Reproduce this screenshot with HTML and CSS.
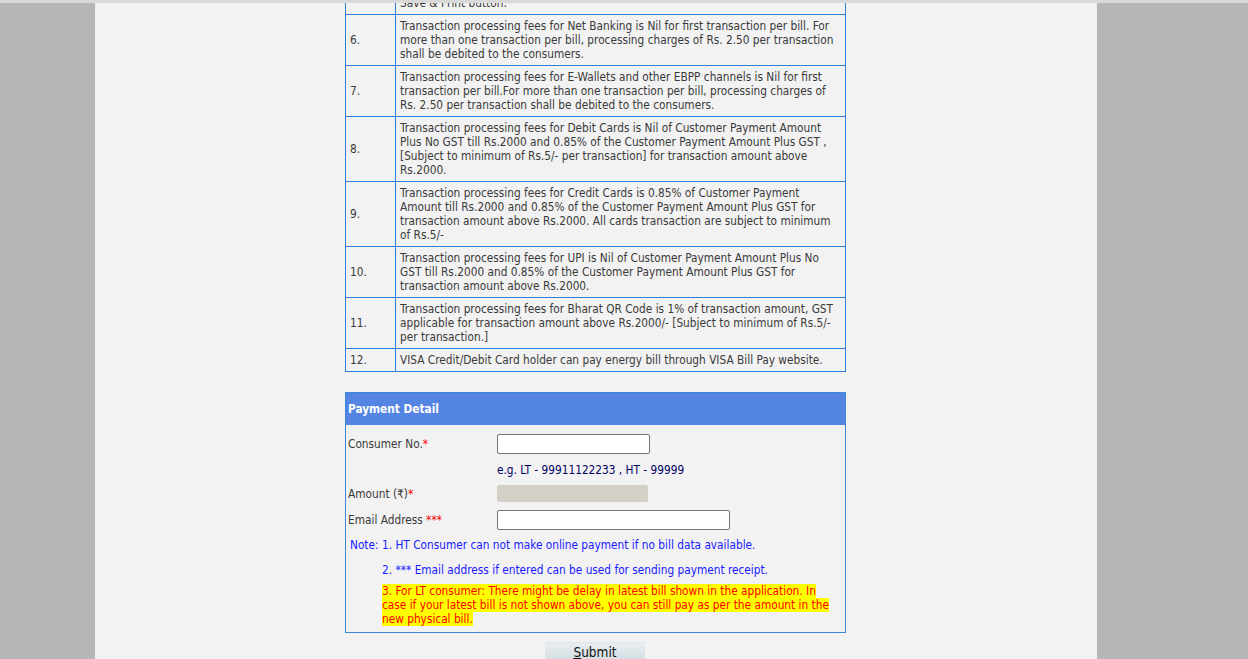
FILE: index.html
```html
<!DOCTYPE html>
<html>
<head>
<meta charset="utf-8">
<title>Online Bill Payment</title>
<link rel="stylesheet" href="styles.css">
</head>
<body>
<div class="topline"></div>
<div class="page">
  <table class="terms">
    <tr><td class="num">5.</td><td>After successful payment, consumer will get the payment receipt on screen. Consumer can take print of the receipt or save it for future reference by clicking on<br>Save &amp; Print button.</td></tr>
    <tr><td class="num">6.</td><td>Transaction processing fees for Net Banking is Nil for first transaction per bill. For more than one transaction per bill, processing charges of Rs. 2.50 per transaction shall be debited to the consumers.</td></tr>
    <tr><td class="num">7.</td><td>Transaction processing fees for E-Wallets and other EBPP channels is Nil for first transaction per bill.For more than one transaction per bill, processing charges of Rs. 2.50 per transaction shall be debited to the consumers.</td></tr>
    <tr><td class="num">8.</td><td>Transaction processing fees for Debit Cards is Nil of Customer Payment Amount Plus No GST till Rs.2000 and 0.85% of the Customer Payment Amount Plus GST , [Subject to minimum of Rs.5/- per transaction] for transaction amount above Rs.2000.</td></tr>
    <tr><td class="num">9.</td><td>Transaction processing fees for Credit Cards is 0.85% of Customer Payment Amount till Rs.2000 and 0.85% of the Customer Payment Amount Plus GST for transaction amount above Rs.2000. All cards transaction are subject to minimum of Rs.5/-</td></tr>
    <tr><td class="num">10.</td><td>Transaction processing fees for UPI is Nil of Customer Payment Amount Plus No GST till Rs.2000 and 0.85% of the Customer Payment Amount Plus GST for transaction amount above Rs.2000.</td></tr>
    <tr><td class="num">11.</td><td>Transaction processing fees for Bharat QR Code is 1% of transaction amount, GST applicable for transaction amount above Rs.2000/- [Subject to minimum of Rs.5/- per transaction.]</td></tr>
    <tr><td class="num">12.</td><td>VISA Credit/Debit Card holder can pay energy bill through VISA Bill Pay website.</td></tr>
  </table>

  <div class="payment">
    <div class="payment-head">Payment Detail</div>
    <div class="payment-body">
      <div class="frow r-consumer">
        <label class="lbl">Consumer No.<span class="req">*</span></label>
        <input class="inp inp-consumer" type="text">
      </div>
      <div class="frow r-hint">
        <span class="lbl"></span>
        <span class="hint">e.g. LT - 99911122233 , HT - 99999</span>
      </div>
      <div class="frow r-amount">
        <label class="lbl">Amount (&#8377;)<span class="req">*</span></label>
        <input class="inp inp-amount" type="text" disabled>
      </div>
      <div class="frow r-email">
        <label class="lbl">Email Address <span class="req">***</span></label>
        <input class="inp inp-email" type="text">
      </div>
      <div class="note note1">Note: 1. HT Consumer can not make online payment if no bill data available.</div>
      <div class="note note2">2. *** Email address if entered can be used for sending payment receipt.</div>
      <div class="note note3"><span class="hl">3. For LT consumer: There might be delay in latest bill shown in the application. In case if your latest bill is not shown above, you can still pay as per the amount in the new physical bill.</span></div>
    </div>
  </div>

  <div class="actions">
    <button class="submit" type="button"><u>S</u>ubmit</button>
  </div>
</div>
</body>
</html>
```

FILE: styles.css
```css
html, body {
  margin: 0;
  padding: 0;
  height: 100%;
  overflow: hidden;
}
body {
  background: #b6b6b6;
  font-family: "DejaVu Sans Condensed", "DejaVu Sans", sans-serif;
  font-stretch: condensed;
  font-size: 11.75px;
  line-height: 14px;
  color: #3a3a3a;
}
.topline {
  height: 3px;
  background: #d9d9d9;
}
.page {
  margin-left: 95px;
  width: 1002px;
  height: 656px;
  background: #f2f2f2;
  overflow: hidden;
}
.terms {
  width: 501px;
  margin: -40px 0 0 250px;
  border-collapse: collapse;
}
.terms td {
  border: 1px solid #2f80d8;
  padding: 4px 4px 4px 4px;
  vertical-align: middle;
}
.terms td.num {
  width: 41px;
}
.payment {
  width: 499px;
  margin: 20px 0 0 250px;
  border: 1px solid #3b88d8;
}
.payment-head {
  height: 32px;
  background: #5585e3;
  color: #fff;
  font-weight: bold;
  display: flex;
  align-items: center;
  padding-left: 2px;
}
.payment-body {
  padding: 9px 0 6px 2px;
}
.frow {
  display: flex;
  align-items: center;
}
.lbl {
  width: 149px;
  flex: none;
}
.req { color: #ff0000; }
.inp {
  box-sizing: border-box;
  margin: 0;
  padding: 0 2px;
  font: inherit;
  background: #fff;
  border: 1px solid #767676;
  border-radius: 2px;
}
.inp-consumer { width: 153px; height: 20px; }
.inp-amount { width: 151px; height: 17px; background: #d4d0c8; border-color: #d4d0c8; }
.inp-email { width: 233px; height: 20px; }
.r-hint { margin-top: 9px; }
.r-amount { margin-top: 8px; }
.r-email { margin-top: 8px; }
.hint { color: #000066; }
.note { color: #1a1aff; }
.note1 { margin-top: 8px; padding-left: 2px; }
.note2 { margin-top: 11px; padding-left: 34px; }
.note3 { margin-top: 7px; padding-left: 34px; padding-right: 12px; color: #ff0000; }
.hl { background: #ffff00; }
.actions {
  display: flex;
  justify-content: center;
  margin-top: 9px;
}
.submit {
  width: 100px;
  height: 24px;
  margin-left: -2px;
  border: 1px solid #dfe5e9;
  border-radius: 2px;
  background: linear-gradient(#e9eef1, #cdd8de);
  font-family: "DejaVu Sans Condensed", "DejaVu Sans", sans-serif;
  font-size: 13.5px;
  color: #111;
  padding: 1px 0 0;
  display: flex;
  justify-content: center;
  align-items: flex-start;
}
```
